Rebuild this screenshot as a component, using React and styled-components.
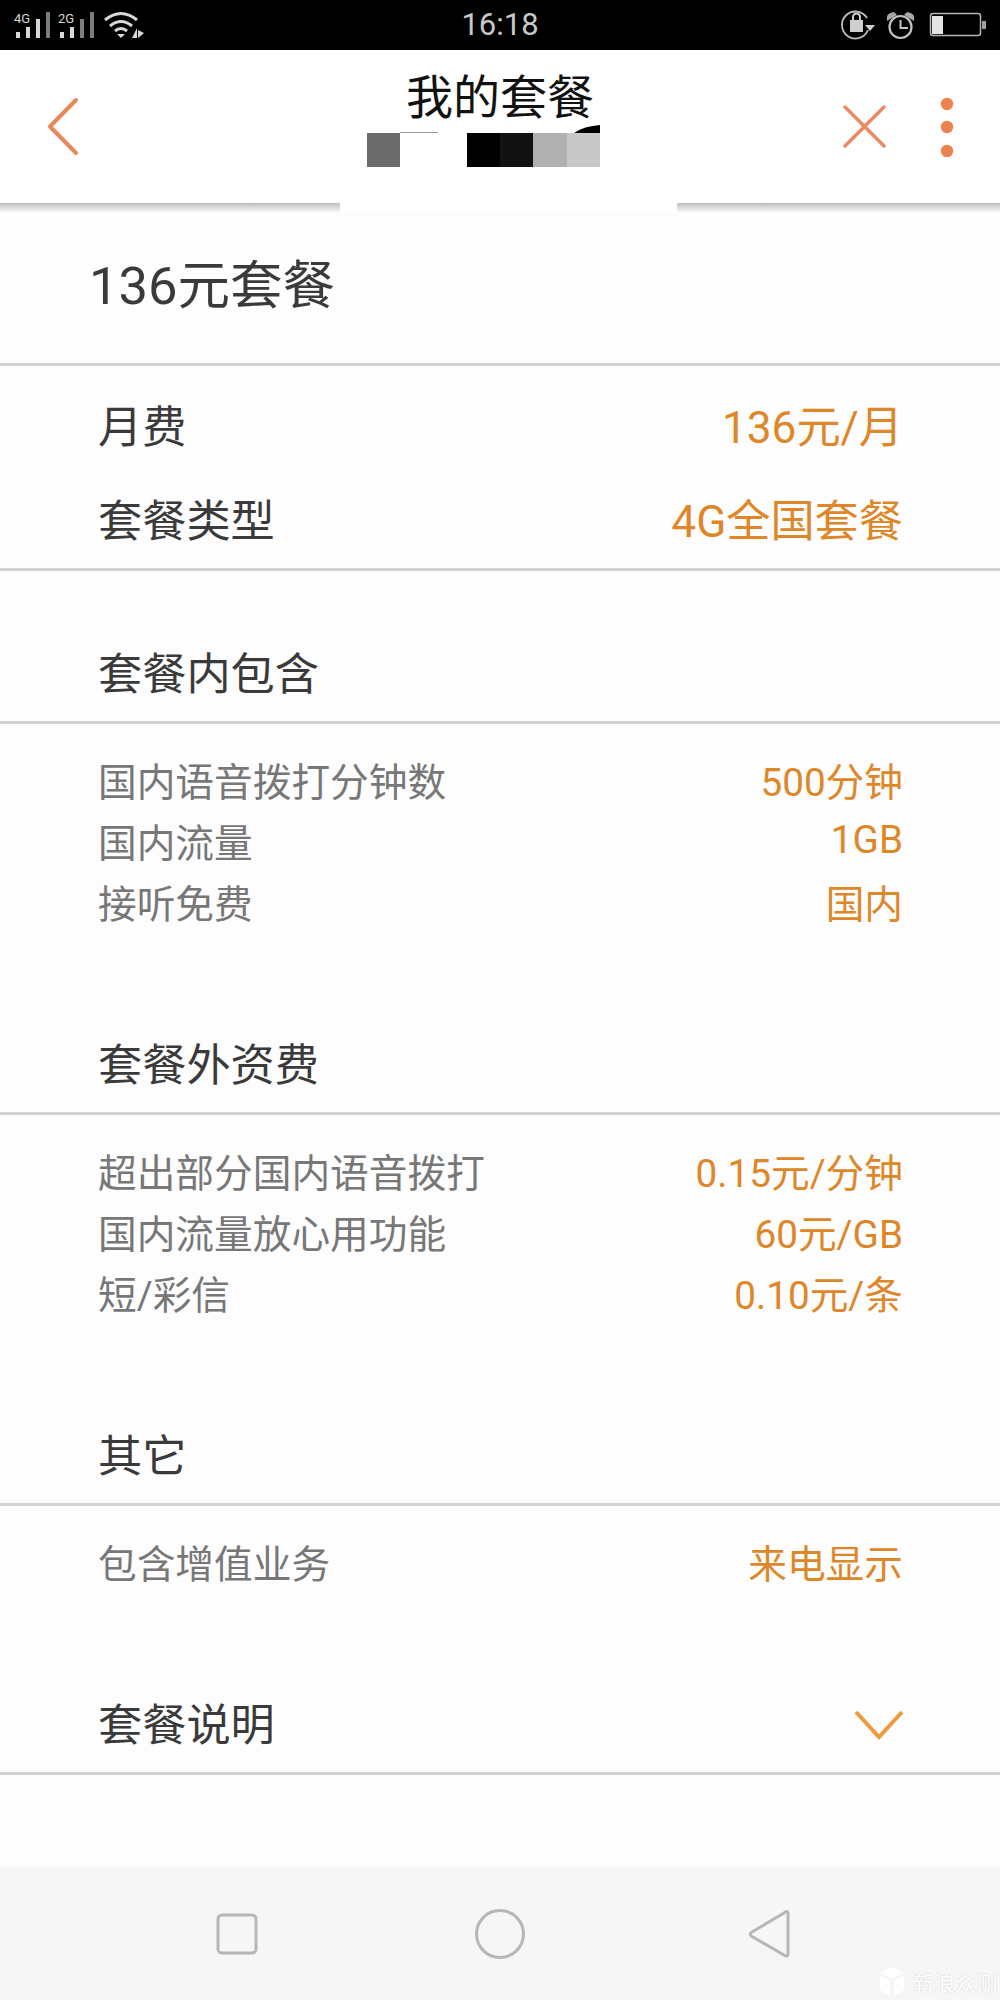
import React from "react";
import styled, { createGlobalStyle } from "styled-components";

const GlobalStyle = createGlobalStyle`
  html, body {
    margin: 0;
    padding: 0;
    background: #fdfdfd;
  }
  * {
    box-sizing: border-box;
  }
`;

const included = [
  ["国内语音拨打分钟数", "500分钟"],
  ["国内流量", "1GB"],
  ["接听免费", "国内"],
];

const extras = [
  ["超出部分国内语音拨打", "0.15元/分钟"],
  ["国内流量放心用功能", "60元/GB"],
  ["短/彩信", "0.10元/条"],
];

const maskColors = ["#6b6b6b", "#fff", "#fff", "#000", "#121212", "#b0b0b0", "#c8c8c8"];

const SignalIcons = () => (
  <svg width="160" height="50" viewBox="0 0 160 50">
    <text x="14" y="23" fontSize="13" fontFamily="Roboto, sans-serif" fill="#d8d8d8">4G</text>
    <rect x="16" y="32" width="4" height="6" fill="#d8d8d8" />
    <rect x="26" y="27" width="4" height="11" fill="#d8d8d8" />
    <rect x="36" y="19" width="4" height="19" fill="#d8d8d8" />
    <rect x="46" y="12" width="4" height="26" fill="#7c7c7c" />
    <text x="58" y="23" fontSize="13" fontFamily="Roboto, sans-serif" fill="#d8d8d8">2G</text>
    <rect x="60" y="32" width="4" height="6" fill="#d8d8d8" />
    <rect x="70" y="27" width="4" height="11" fill="#d8d8d8" />
    <rect x="80" y="19" width="4" height="19" fill="#7c7c7c" />
    <rect x="90" y="12" width="4" height="26" fill="#7c7c7c" />
    <g fill="none" stroke="#d8d8d8" strokeWidth="3">
      <path d="M105 20 Q121 7 137 20" />
      <path d="M110 26 Q121 17 132 26" />
      <path d="M115 31 Q121 26 127 31" />
    </g>
    <path d="M117 34 L125 34 L121 38 Z" fill="#d8d8d8" />
    <path d="M132 38 L137 28 L137 38 Z" fill="#d8d8d8" />
    <path d="M138 30 L144 33 L138 38 Z" fill="#d8d8d8" />
  </svg>
);

const SystemIcons = () => (
  <svg width="170" height="50" viewBox="0 0 170 50">
    <path d="M38 30 A13.5 13.5 0 1 1 37 18" fill="none" stroke="#bdbdbd" strokeWidth="1.8" />
    <path d="M35 25 L45 25 L40 31 Z" fill="#d0d0d0" />
    <rect x="20" y="20" width="13" height="12" fill="#cfcfcf" />
    <path d="M23 20 V17 A3.5 3.5 0 0 1 30 17 V20" fill="none" stroke="#cfcfcf" strokeWidth="2" />
    <circle cx="70.500" cy="27" r="11" fill="none" stroke="#c4c4c4" strokeWidth="2.2" />
    <path d="M70.500 20 V28 H78" fill="none" stroke="#c4c4c4" strokeWidth="2" />
    <path d="M57 21 Q55 13 64 12 L67 15 Z" fill="#a8a8a8" />
    <path d="M84 21 Q86 13 77 12 L74 15 Z" fill="#a8a8a8" />
    <rect x="100.500" y="13.500" width="50" height="22" rx="2.500" fill="none" stroke="#b5b5b5" strokeWidth="1.5" />
    <rect x="102" y="16" width="11" height="18" fill="#e4e4e4" />
    <rect x="152" y="21" width="4" height="8" fill="#a0a0a0" />
  </svg>
);

const BackIcon = () => (
  <svg width="34" height="61" viewBox="0 0 34 61">
    <path d="M30 4 L4 30.500 L30 57" fill="none" stroke="#e9875b" strokeWidth="4" strokeLinecap="round" strokeLinejoin="round" />
  </svg>
);

const CloseIcon = () => (
  <svg width="43" height="43" viewBox="0 0 43 43">
    <path d="M2 2 L41 41 M41 2 L2 41" fill="none" stroke="#ea8a60" strokeWidth="3.500" strokeLinecap="round" />
  </svg>
);

const MoreIcon = () => (
  <svg width="14" height="60" viewBox="0 0 14 60">
    <circle cx="7" cy="7" r="6.200" fill="#ee8150" />
    <circle cx="7" cy="30" r="6.200" fill="#ee8150" />
    <circle cx="7" cy="54" r="6.200" fill="#ee8150" />
  </svg>
);

const ExpandIcon = () => (
  <ExpandSvg width="52" height="30" viewBox="0 0 52 30">
    <path d="M3 2 L26 27 L49 2" fill="none" stroke="#ee9a3c" strokeWidth="4" />
  </ExpandSvg>
);

const RecentIcon = () => (
  <svg width="43" height="44" viewBox="0 0 43 44">
    <rect x="3" y="3" width="38" height="38" rx="4" fill="none" stroke="#b6b6b6" strokeWidth="3" />
  </svg>
);

const HomeIcon = () => (
  <svg width="52" height="52" viewBox="0 0 52 52">
    <circle cx="26" cy="26" r="23.500" fill="none" stroke="#b6b6b6" strokeWidth="3" />
  </svg>
);

const ReturnIcon = () => (
  <svg width="52" height="52" viewBox="0 0 52 52">
    <path d="M46 6 Q46 1.500 42 5 L10 24 Q6.500 26 10 28.500 L42 47 Q46 50 46 45 Z" fill="none" stroke="#b6b6b6" strokeWidth="3" strokeLinejoin="round" />
  </svg>
);

const WatermarkLogo = () => (
  <svg width="26" height="32" viewBox="0 0 26 32">
    <path d="M13 1 L25 7 L13 13 L1 7 Z" fill="#fff" />
    <path d="M1 10 L11 15 L11 30 L1 24 Z" fill="#fff" />
    <path d="M25 10 L15 15 L15 30 L25 24 Z" fill="#fff" />
  </svg>
);

const MaskCurve = () => (
  <MaskCurveBox width="26" height="8" viewBox="0 0 26 8">
    <path d="M0 8 Q10 1 26 0 V8 Z" fill="#000" />
  </MaskCurveBox>
);

const DetailRows = ({ rows }) => (
  <DetailList>
    {rows.map(([label, value]) => (
      <DetailRow key={label}>
        <DetailLabel>{label}</DetailLabel>
        <Value>{value}</Value>
      </DetailRow>
    ))}
  </DetailList>
);

const App = () => {
  return (
    <Page>
      <GlobalStyle />
      <StatusBar>
        <StatusSide>
          <SignalIcons />
        </StatusSide>
        <Clock>16:18</Clock>
        <StatusSide $end>
          <SystemIcons />
        </StatusSide>
      </StatusBar>

      <Header>
        <BackSlot>
          <BackIcon />
        </BackSlot>
        <TitleBlock>
          <Title>我的套餐</Title>
          <MaskRow>
            <MaskTick />
            <MaskCurve />
            {maskColors.map((color, i) => (
              <MaskCell key={i} $color={color} />
            ))}
          </MaskRow>
        </TitleBlock>
        <HeaderActions>
          <CloseIcon />
          <MoreIcon />
        </HeaderActions>
      </Header>
      <HeaderShadow>
        <ShadowEdge $width={340} />
        <ShadowEdge $width={323} />
      </HeaderShadow>

      <Main>
        <PlanName>136元套餐</PlanName>
        <Summary>
          <SummaryRow>
            <span>月费</span>
            <Value>136元/月</Value>
          </SummaryRow>
          <SummaryRow>
            <span>套餐类型</span>
            <Value>4G全国套餐</Value>
          </SummaryRow>
        </Summary>

        <SectionHead $gap={53}>套餐内包含</SectionHead>
        <DetailRows rows={included} />

        <SectionHead $gap={84}>套餐外资费</SectionHead>
        <DetailRows rows={extras} />

        <SectionHead $gap={84}>其它</SectionHead>
        <DetailRows rows={[["包含增值业务", "来电显示"]]} />

        <SectionHead $gap={84}>
          套餐说明
          <ExpandIcon />
        </SectionHead>
      </Main>

      <NavBar>
        <RecentIcon />
        <HomeIcon />
        <ReturnIcon />
        <Watermark>
          <WatermarkLogo />
          <span>新浪众测</span>
        </Watermark>
      </NavBar>
    </Page>
  );
};

export default App;

const fontStack = `Roboto, "Noto Sans CJK SC", sans-serif`;

const Page = styled.div`
  width: 1000px;
  height: 2000px;
  display: flex;
  flex-direction: column;
  overflow: hidden;
  background: #fdfdfd;
  font-family: ${fontStack};
`;

const StatusBar = styled.div`
  height: 50px;
  background: #000;
  display: grid;
  grid-template-columns: 1fr auto 1fr;
  align-items: center;
`;

const StatusSide = styled.div`
  display: flex;
  height: 50px;
  justify-content: ${(p) => (p.$end ? "flex-end" : "flex-start")};
`;

const Clock = styled.div`
  color: #c8c8c8;
  font-size: 31px;
  line-height: 50px;
`;

const Header = styled.div`
  height: 153px;
  display: flex;
  align-items: center;
  background: #fff;
`;

const BackSlot = styled.div`
  width: 367px;
  padding-left: 46px;
  display: flex;
`;

const TitleBlock = styled.div`
  width: 233px;
  height: 153px;
  padding-top: 23px;
  display: flex;
  flex-direction: column;
`;

const Title = styled.div`
  margin-left: 39px;
  font-size: 47px;
  line-height: 50px;
  color: #111;
  white-space: nowrap;
`;

const MaskRow = styled.div`
  position: relative;
  display: flex;
  margin-top: 10px;
`;

const MaskCell = styled.div`
  flex: 1;
  height: 34px;
  background: ${(p) => p.$color};
`;

const MaskTick = styled.div`
  position: absolute;
  left: 33px;
  top: -1px;
  width: 38px;
  height: 1px;
  background: #9a9a9a;
`;

const MaskCurveBox = styled.svg`
  position: absolute;
  right: 0;
  top: -8px;
`;

const HeaderActions = styled.div`
  flex: 1;
  padding-left: 243px;
  display: flex;
  align-items: center;
  gap: 54px;
`;

const HeaderShadow = styled.div`
  height: 9px;
  display: flex;
  justify-content: space-between;
  background: #fff;
`;

const ShadowEdge = styled.div`
  width: ${(p) => p.$width}px;
  background: linear-gradient(#bdbdbd, #d8d8d8 45%, #f6f6f6);
`;

const Main = styled.div`
  flex: 1;
  display: flex;
  flex-direction: column;
`;

const PlanName = styled.div`
  height: 154px;
  padding: 43px 0 0 89px;
  font-size: 52.500px;
  line-height: 62px;
  color: #3a3a3a;
  border-bottom: 3px solid #d2d2d2;
`;

const Summary = styled.div`
  padding: 11px 0 3px;
  border-bottom: 3px solid #d2d2d2;
`;

const SummaryRow = styled.div`
  height: 94px;
  padding: 0 97px 0 98px;
  display: flex;
  justify-content: space-between;
  align-items: center;
  font-size: 44.200px;
  color: #3a3a3a;
`;

const Value = styled.span`
  color: #de8729;
`;

const SectionHead = styled.div`
  margin-top: ${(p) => p.$gap}px;
  height: 100px;
  padding: 0 95px 3px 98px;
  display: flex;
  justify-content: space-between;
  align-items: center;
  font-size: 44.200px;
  color: #3a3a3a;
  border-bottom: 3px solid #d2d2d2;
`;

const ExpandSvg = styled.svg`
  margin-top: 5px;
`;

const DetailList = styled.div`
  padding-top: 24px;
`;

const DetailRow = styled.div`
  height: 61px;
  padding: 0 97px 0 98px;
  display: flex;
  justify-content: space-between;
  align-items: center;
  font-size: 38.700px;
`;

const DetailLabel = styled.span`
  color: #777;
`;

const NavBar = styled.div`
  position: relative;
  height: 133px;
  padding-left: 215px;
  display: flex;
  align-items: center;
  gap: 216px;
  background: #f6f6f6;
`;

const Watermark = styled.div`
  position: absolute;
  right: 3px;
  bottom: 2px;
  display: flex;
  align-items: center;
  gap: 8px;
  color: #fff;
  font-size: 21px;
  text-shadow: 0 0 2px #cfcfcf;
`;
